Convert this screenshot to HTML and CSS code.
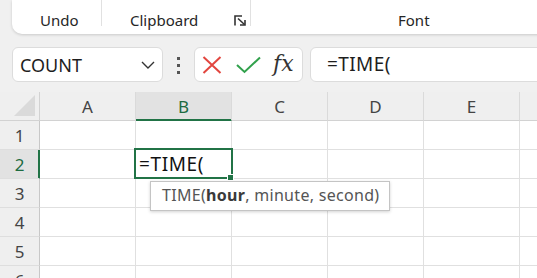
FILE: index.html
```html
<!DOCTYPE html>
<html>
<head>
<meta charset="utf-8">
<link rel="stylesheet" href="styles.css">
</head>
<body>
<div class="ribbon">
  <div class="group g-undo"><span class="label">Undo</span></div>
  <div class="sep"></div>
  <div class="group g-clip">
    <span class="label">Clipboard</span>
    <svg class="launcher" width="12" height="11" viewBox="0 0 12 11">
      <path d="M1 10.5 V1 H8" fill="none" stroke="#333" stroke-width="1.6"/>
      <path d="M4 3.5 L10.5 9.5" fill="none" stroke="#333" stroke-width="1.6"/>
      <path d="M11 5 V10 H6" fill="none" stroke="#333" stroke-width="1.6"/>
    </svg>
  </div>
  <div class="sep"></div>
  <div class="group g-font"><span class="label">Font</span></div>
</div>

<div class="fbar">
  <div class="namebox">
    <span class="name">COUNT</span>
    <svg class="chev" width="14" height="8" viewBox="0 0 14 8">
      <path d="M1 1 L7 7 L13 1" fill="none" stroke="#333" stroke-width="1.4"/>
    </svg>
  </div>
  <div class="dots"><i></i><i></i><i></i></div>
  <div class="fxbox">
    <svg class="ico-x" width="20" height="18" viewBox="0 0 20 18">
      <path d="M1.5 1 L18.5 17 M18.5 1 L1.5 17" stroke="#e2463f" stroke-width="2" fill="none"/>
    </svg>
    <svg class="ico-ok" width="26" height="18" viewBox="0 0 26 18">
      <path d="M1 9 L8.5 16 L24 1.5" stroke="#31a14c" stroke-width="2" fill="none"/>
    </svg>
    <span class="fx">fx</span>
  </div>
  <div class="finput">=TIME(</div>
</div>

<div class="sheet">
  <div class="grid">
    <div class="hdr corner">
      <svg class="tri" width="40" height="28" viewBox="0 0 40 28"><path d="M35 3 L35 24 L14 24 Z" fill="#dadada"/></svg>
    </div>
    <div class="hdr col">A</div>
    <div class="hdr col act-col">B</div>
    <div class="hdr col">C</div>
    <div class="hdr col">D</div>
    <div class="hdr col">E</div>
    <div class="hdr col last"></div>

    <div class="rh">1</div><div class="c"></div><div class="c"></div><div class="c"></div><div class="c"></div><div class="c"></div><div class="c last"></div>
    <div class="rh act-row">2</div><div class="c"></div><div class="c txt">=TIME(</div><div class="c"></div><div class="c"></div><div class="c"></div><div class="c last"></div>
    <div class="rh">3</div><div class="c"></div><div class="c"></div><div class="c"></div><div class="c"></div><div class="c"></div><div class="c last"></div>
    <div class="rh">4</div><div class="c"></div><div class="c"></div><div class="c"></div><div class="c"></div><div class="c"></div><div class="c last"></div>
    <div class="rh">5</div><div class="c"></div><div class="c"></div><div class="c"></div><div class="c"></div><div class="c"></div><div class="c last"></div>
    <div class="rh">6</div><div class="c"></div><div class="c"></div><div class="c"></div><div class="c"></div><div class="c"></div><div class="c last"></div>
  </div>
  <div class="active-cell"><span class="handle"></span></div>
  <div class="tooltip">TIME(<b>hour</b>, minute, second)</div>
</div>
</body>
</html>
```

FILE: styles.css
```css
* { box-sizing: border-box; }
html, body {
  margin: 0;
  padding: 0;
  width: 537px;
  height: 278px;
  overflow: hidden;
  background: #f0f0f0;
  font-family: "Noto Sans", "Open Sans", sans-serif;
  color: #222;
}

/* Ribbon */
.ribbon {
  margin-left: 12px;
  height: 34px;
  background: #fff;
  border-bottom-left-radius: 10px;
  box-shadow: 0 1px 3px rgba(0,0,0,0.16);
  display: flex;
  align-items: flex-start;
  width: 540px;
}
.group {
  height: 34px;
  display: flex;
  align-items: flex-start;
}
.label {
  font-size: 15px;
  line-height: 20px;
  padding-top: 10px;
  color: #262626;
}
.g-undo { width: 89px; padding-left: 28px; }
.g-clip { width: 148px; padding-left: 28px; padding-right: 4px; }
.g-font { padding-left: 147px; }
.launcher { margin-left: auto; margin-top: 15px; }
.sep {
  width: 1px;
  height: 26px;
  background: #e1e1e1;
}

/* Formula bar */
.fbar {
  margin-top: 13px;
  height: 35px;
  display: flex;
  align-items: stretch;
}
.namebox {
  margin-left: 12px;
  width: 151px;
  background: #fff;
  border: 1px solid #dcdcdc;
  border-radius: 6px;
  display: flex;
  align-items: center;
  padding-left: 7px;
  padding-right: 7px;
}
.name { font-size: 18px; color: #1e1e1e; }
.chev { margin-left: auto; margin-top: 1px; }
.dots {
  width: 31px;
  display: flex;
  flex-direction: column;
  align-items: center;
  justify-content: center;
  gap: 4px;
  padding-top: 1px;
}
.dots i {
  display: block;
  width: 3px;
  height: 3px;
  background: #555;
}
.fxbox {
  width: 109px;
  background: #fff;
  border: 1px solid #dcdcdc;
  border-radius: 6px;
  display: flex;
  align-items: center;
  padding-left: 7px;
}
.ico-x { margin-right: 14px; }
.fx {
  margin-left: 11px;
  font-family: "DejaVu Serif", "Liberation Serif", serif;
  font-style: italic;
  font-size: 22px;
  color: #333;
  line-height: 1;
  margin-top: -2px;
}
.finput {
  margin-left: 7px;
  flex: 1;
  margin-right: -12px;
  background: #fff;
  border: 1px solid #dcdcdc;
  border-radius: 6px;
  padding-left: 16px;
  font-size: 19px;
  line-height: 33px;
  color: #1e1e1e;
  letter-spacing: 0.4px;
}

/* Sheet */
.sheet {
  margin-top: 10px;
  position: relative;
}
.grid {
  display: grid;
  grid-template-columns: 40px repeat(5, 96px) 1fr;
  grid-template-rows: 29px repeat(6, 29px);
}
.hdr {
  background: #efefef;
  border-bottom: 1px solid #d2d2d2;
  font-size: 17px;
  color: #444;
  display: flex;
  align-items: center;
  justify-content: center;
  padding-top: 1px;
}
.hdr.corner { border-right: 1px solid #d2d2d2; position: relative; }
.tri { position: absolute; left: 0; top: 0; }
.hdr.col { border-right: 1px solid #dadada; }
.hdr.act-col {
  background: #e2e2e2;
  color: #1d6b41;
  border-bottom: 1px solid #217346;
  box-shadow: inset 0 -1px 0 #217346;
}
.rh {
  background: #efefef;
  border-right: 1px solid #c8c8c8;
  border-bottom: 1px solid #dedede;
  font-size: 17px;
  color: #444;
  display: flex;
  align-items: center;
  justify-content: center;
}
.rh.act-row {
  background: #e2e2e2;
  color: #1d6b41;
  border-right: 1px solid #217346;
  box-shadow: inset -1px 0 0 #217346;
}
.c {
  background: #fff;
  border-right: 1px solid #e0e0e0;
  border-bottom: 1px solid #e0e0e0;
}
.c.last, .hdr.last { border-right: none; }
.c.txt {
  font-size: 19px;
  color: #111;
  padding-left: 3px;
  line-height: 28px;
  letter-spacing: 0.6px;
  white-space: nowrap;
}
.active-cell {
  position: absolute;
  left: 134px;
  top: 56px;
  width: 99px;
  height: 31px;
  border: 2px solid #217346;
}
.handle {
  position: absolute;
  right: -3px;
  bottom: -4px;
  width: 7px;
  height: 7px;
  background: #217346;
  border: 1px solid #fff;
}
.tooltip {
  position: absolute;
  left: 150px;
  top: 89px;
  width: 240px;
  height: 30px;
  background: #fff;
  border: 1px solid #c4c4c4;
  box-shadow: 0 1px 3px rgba(0,0,0,0.18);
  padding-left: 11px;
  font-size: 16px;
  line-height: 27px;
  letter-spacing: 0.3px;
  color: #555;
  white-space: nowrap;
}
.tooltip b { color: #3a3a3a; font-weight: 700; }
```
